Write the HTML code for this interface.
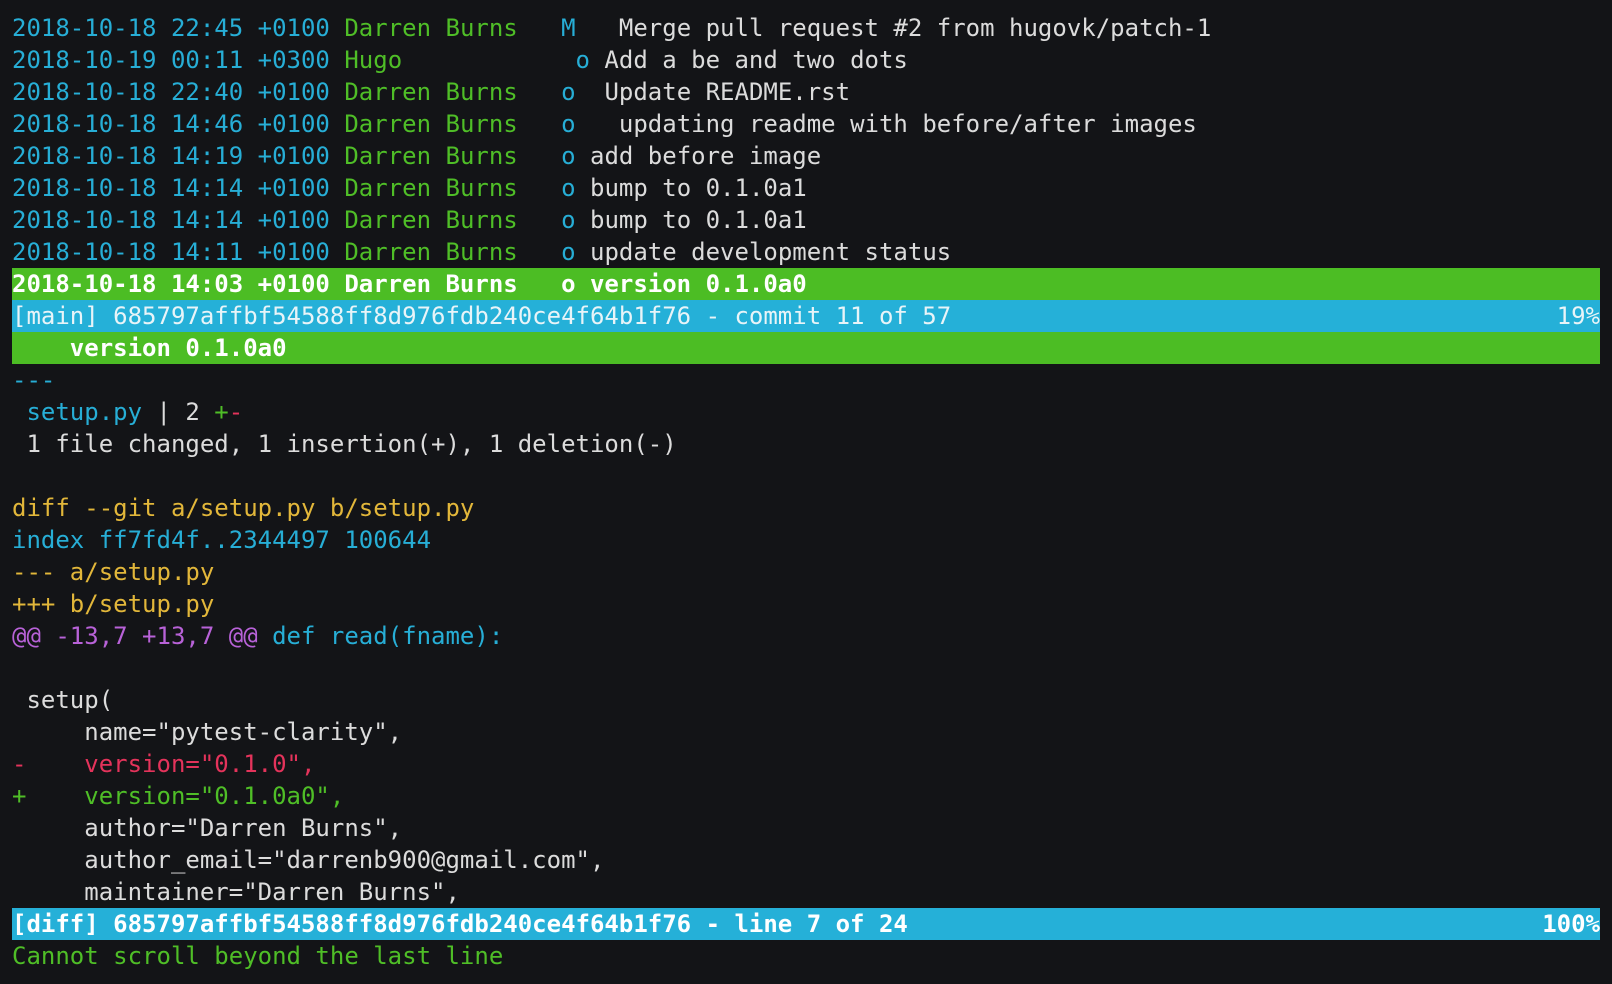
<!DOCTYPE html>
<html><head><meta charset="utf-8"><style>
html,body{margin:0;padding:0;background:#131417;width:1612px;height:984px;overflow:hidden}
.t{position:absolute;left:12px;top:12px;width:1588px;font-family:"DejaVu Sans Mono","Liberation Mono",monospace;font-size:24px;color:#dcdcdc}
.l{height:32px;line-height:32px;white-space:pre;position:relative}
.c{color:#27aed6}.g{color:#4fbe27}.y{color:#e2b73a}.p{color:#b862d8}.r{color:#e4335b}
.gb{background:#4cbd24;color:#fff;font-weight:bold}
.bb{background:#25b0d8;color:#e8f4f8}
.bb2{background:#25b0d8;color:#fff;font-weight:bold}
.rt{position:absolute;right:0;top:0}
</style></head><body><div class="t">
<div class="l"><span class="c">2018-10-18 22:45 +0100</span> <span class="g">Darren Burns</span>   <span class="c">M</span>   Merge pull request #2 from hugovk/patch-1</div>
<div class="l"><span class="c">2018-10-19 00:11 +0300</span> <span class="g">Hugo</span>            <span class="c">o</span> Add a be and two dots</div>
<div class="l"><span class="c">2018-10-18 22:40 +0100</span> <span class="g">Darren Burns</span>   <span class="c">o</span>  Update README.rst</div>
<div class="l"><span class="c">2018-10-18 14:46 +0100</span> <span class="g">Darren Burns</span>   <span class="c">o</span>   updating readme with before/after images</div>
<div class="l"><span class="c">2018-10-18 14:19 +0100</span> <span class="g">Darren Burns</span>   <span class="c">o</span> add before image</div>
<div class="l"><span class="c">2018-10-18 14:14 +0100</span> <span class="g">Darren Burns</span>   <span class="c">o</span> bump to 0.1.0a1</div>
<div class="l"><span class="c">2018-10-18 14:14 +0100</span> <span class="g">Darren Burns</span>   <span class="c">o</span> bump to 0.1.0a1</div>
<div class="l"><span class="c">2018-10-18 14:11 +0100</span> <span class="g">Darren Burns</span>   <span class="c">o</span> update development status</div>
<div class="l gb">2018-10-18 14:03 +0100 Darren Burns   o version 0.1.0a0</div>
<div class="l bb">[main] 685797affbf54588ff8d976fdb240ce4f64b1f76 - commit 11 of 57<span class="rt">19%</span></div>
<div class="l gb">    version 0.1.0a0</div>
<div class="l c">---</div>
<div class="l"> <span class="c">setup.py</span> | 2 <span class="g">+</span><span class="r">-</span></div>
<div class="l"> 1 file changed, 1 insertion(+), 1 deletion(-)</div>
<div class="l"> </div>
<div class="l y">diff --git a/setup.py b/setup.py</div>
<div class="l c">index ff7fd4f..2344497 100644</div>
<div class="l y">--- a/setup.py</div>
<div class="l y">+++ b/setup.py</div>
<div class="l"><span class="p">@@ -13,7 +13,7 @@</span> <span class="c">def read(fname):</span></div>
<div class="l"> </div>
<div class="l"> setup(</div>
<div class="l">     name="pytest-clarity",</div>
<div class="l r">-    version="0.1.0",</div>
<div class="l g">+    version="0.1.0a0",</div>
<div class="l">     author="Darren Burns",</div>
<div class="l">     author_email="darrenb900@gmail.com",</div>
<div class="l">     maintainer="Darren Burns",</div>
<div class="l bb2">[diff] 685797affbf54588ff8d976fdb240ce4f64b1f76 - line 7 of 24<span class="rt">100%</span></div>
<div class="l g">Cannot scroll beyond the last line</div>
</div></body></html>
